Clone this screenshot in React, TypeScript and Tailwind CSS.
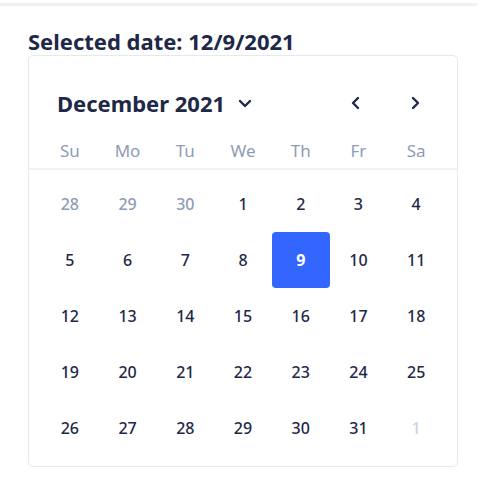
import React, { useState } from 'react';

const weekdays = ['Su', 'Mo', 'Tu', 'We', 'Th', 'Fr', 'Sa'];

type Day = { n: number; kind: 'prev' | 'cur' | 'next' };

const buildDays = (): Day[] => {
  const days: Day[] = [28, 29, 30].map((n) => ({ n, kind: 'prev' as const }));
  for (let i = 1; i <= 31; i++) days.push({ n: i, kind: 'cur' });
  days.push({ n: 1, kind: 'next' });
  return days;
};

const Chevron = ({ dir }: { dir: 'left' | 'right' | 'down' }) => {
  const d = dir === 'left' ? 'M10 3 L5 8 L10 13' : dir === 'right' ? 'M6 3 L11 8 L6 13' : 'M3 6 L8 11 L13 6';
  return (
    <svg width="16" height="16" viewBox="0 0 16 16" fill="none" stroke="currentColor" strokeWidth="2.4" strokeLinecap="round" strokeLinejoin="round">
      <path d={d} />
    </svg>
  );
};

export default function App() {
  const [selected, setSelected] = useState(9);
  const days = buildDays();

  return (
    <div className="min-h-[486px] bg-white text-[#1e293b]" style={{ fontFamily: '"Noto Sans", "Open Sans", sans-serif' }}>
      <div className="h-[3px] w-[477px] mt-[3px] bg-[#eef1f5]" />
      <div className="pl-[28px] pt-[22px]">
        <h2 className="text-[22px] leading-[26px] font-bold text-[#1e2847]">Selected date: 12/{selected}/2021</h2>
        <div className="mt-[1px] w-[430px] rounded-[5px] border border-[#e5e8f0] pb-[10px]">
          <div className="flex items-center h-[62px] mt-[16px] pl-[28px] pr-[34px]">
            <button className="flex items-center gap-[12px] text-[22px] font-bold text-[#1e2847]">
              December 2021
              <Chevron dir="down" />
            </button>
            <div className="ml-auto flex items-center gap-[43px] text-[#1e2847]">
              <button><Chevron dir="left" /></button>
              <button><Chevron dir="right" /></button>
            </div>
          </div>
          <div className="grid grid-cols-7 px-[12px] h-[36px] items-center border-b-2 border-[#eef1f5]">
            {weekdays.map((w) => (
              <div key={w} className="text-center text-[17px] text-[#8e9cb6]">{w}</div>
            ))}
          </div>
          <div className="grid grid-cols-7 px-[12px] pt-[6px]">
            {days.map((d, i) => {
              const isSel = d.kind === 'cur' && d.n === selected;
              const color = isSel
                ? 'bg-[#3366ff] text-white font-bold'
                : d.kind === 'prev'
                ? 'text-[#8e9cb6] font-medium'
                : d.kind === 'next'
                ? 'text-[#cbd3df] font-medium'
                : 'text-[#1e2847] font-medium';
              return (
                <button
                  key={i}
                  onClick={() => d.kind === 'cur' && setSelected(d.n)}
                  className={`h-[56px] rounded-[4px] text-[16px] flex items-center justify-center ${color}`}
                >
                  {d.n}
                </button>
              );
            })}
          </div>
        </div>
      </div>
    </div>
  );
}
